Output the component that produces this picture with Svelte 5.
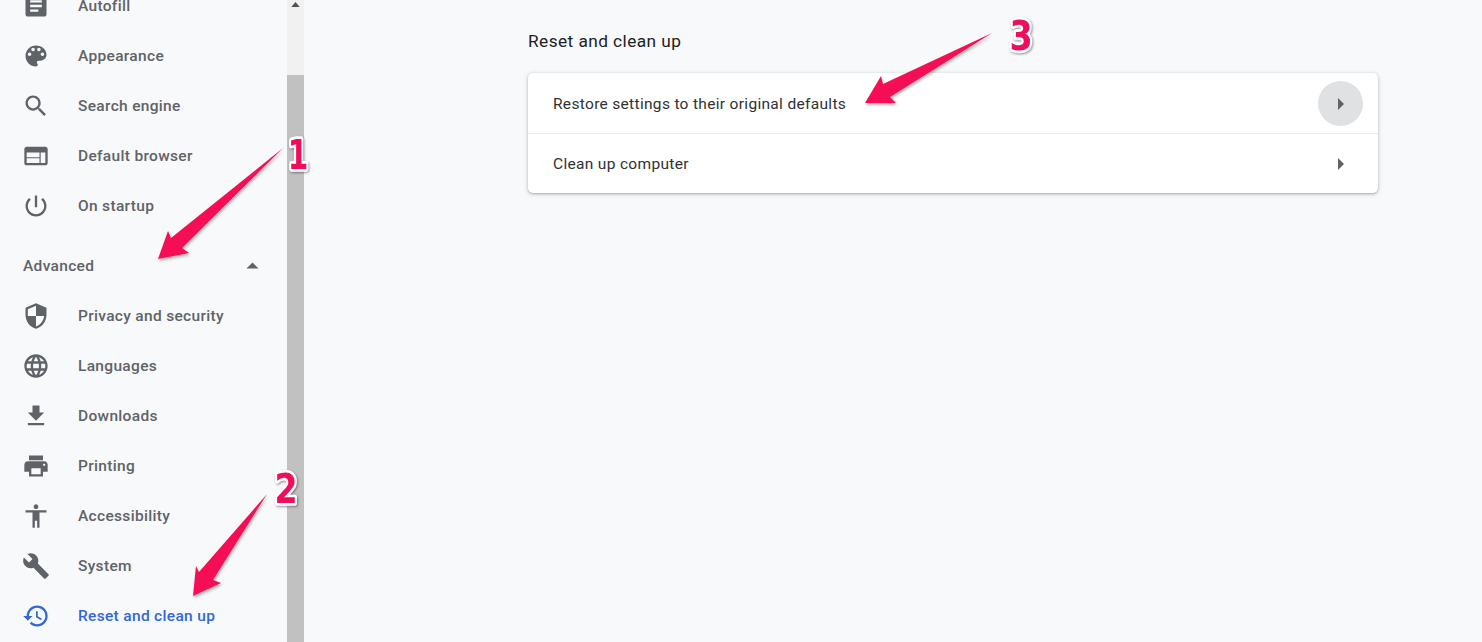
<script>
	const icons = {
		autofill: 'M19 3h-4.18C14.4 1.84 13.3 1 12 1c-1.3 0-2.4.84-2.82 2H5c-1.1 0-2 .9-2 2v14c0 1.1.9 2 2 2h14c1.1 0 2-.9 2-2V5c0-1.1-.9-2-2-2zm-7 0c.55 0 1 .45 1 1s-.45 1-1 1-1-.45-1-1 .45-1 1-1zm2 14H7v-2h7v2zm3-4H7v-2h10v2zm0-4H7V7h10v2z',
		palette: 'M12 3c-4.97 0-9 4.03-9 9s4.03 9 9 9c.83 0 1.5-.67 1.5-1.5 0-.39-.15-.74-.39-1.01-.23-.26-.38-.61-.38-.99 0-.83.67-1.5 1.5-1.5H16c2.76 0 5-2.24 5-5 0-4.42-4.03-8-9-8zm-5.5 9c-.83 0-1.5-.67-1.5-1.5S5.67 9 6.5 9 8 9.67 8 10.5 7.33 12 6.5 12zm3-4C8.67 8 8 7.33 8 6.5S8.67 5 9.5 5s1.5.67 1.5 1.5S10.33 8 9.5 8zm5 0c-.83 0-1.5-.67-1.5-1.5S13.67 5 14.5 5s1.5.67 1.5 1.5S15.33 8 14.5 8zm3 4c-.83 0-1.5-.67-1.5-1.5S16.67 9 17.5 9s1.5.67 1.5 1.5-.67 1.5-1.5 1.5z',
		search: 'M15.5 14h-.79l-.28-.27C15.41 12.59 16 11.11 16 9.5 16 5.91 13.09 3 9.5 3S3 5.91 3 9.5 5.91 16 9.5 16c1.61 0 3.09-.59 4.23-1.57l.27.28v.79l5 4.99L20.49 19l-4.99-5zm-6 0C7.01 14 5 11.99 5 9.5S7.01 5 9.5 5 14 7.01 14 9.5 11.99 14 9.5 14z',
		web: 'M20 4H4c-1.1 0-1.99.9-1.99 2L2 18c0 1.1.9 2 2 2h16c1.1 0 2-.9 2-2V6c0-1.1-.9-2-2-2zm-5 14H4v-4h11v4zm0-5H4V9h11v4zm5 5h-4V9h4v9z',
		power: 'M13 3h-2v10h2V3zm4.83 2.17l-1.42 1.42C17.99 7.86 19 9.81 19 12c0 3.87-3.13 7-7 7s-7-3.13-7-7c0-2.19 1.01-4.14 2.58-5.42L6.17 5.17C4.23 6.82 3 9.26 3 12c0 4.97 4.03 9 9 9s9-4.03 9-9c0-2.74-1.23-5.18-3.17-6.83z',
		security: 'M12 1L3 5v6c0 5.55 3.84 10.74 9 12 5.16-1.26 9-6.45 9-12V5l-9-4zm0 10.99h7c-.53 4.12-3.28 7.79-7 8.94V12H5V6.3l7-3.11v8.8z',
		language: 'M11.99 2C6.47 2 2 6.48 2 12s4.47 10 9.99 10C17.52 22 22 17.52 22 12S17.52 2 11.99 2zm6.93 6h-2.95c-.32-1.25-.78-2.45-1.38-3.56 1.84.63 3.37 1.91 4.33 3.56zM12 4.04c.83 1.2 1.48 2.53 1.91 3.96h-3.82c.43-1.43 1.08-2.76 1.91-3.96zM4.26 14C4.1 13.36 4 12.69 4 12s.1-1.36.26-2h3.38c-.08.66-.14 1.32-.14 2 0 .68.06 1.34.14 2H4.26zm.82 2h2.95c.32 1.25.78 2.45 1.38 3.56-1.84-.63-3.37-1.9-4.33-3.56zm2.95-8H5.08c.96-1.66 2.49-2.93 4.33-3.56C8.81 5.55 8.35 6.75 8.03 8zM12 19.96c-.83-1.2-1.48-2.53-1.91-3.96h3.82c-.43 1.43-1.08 2.76-1.91 3.96zM14.34 14H9.66c-.09-.66-.16-1.32-.16-2 0-.68.07-1.35.16-2h4.68c.09.65.16 1.32.16 2 0 .68-.07 1.34-.16 2zm.25 5.56c.6-1.11 1.06-2.31 1.38-3.56h2.95c-.96 1.65-2.49 2.93-4.33 3.56zM16.36 14c.08-.66.14-1.32.14-2 0-.68-.06-1.34-.14-2h3.38c.16.64.26 1.31.26 2s-.1 1.36-.26 2h-3.38z',
		download: 'M19 9h-4V3H9v6H5l7 7 7-7zM5 18v2h14v-2H5z',
		print: 'M19 8H5c-1.66 0-3 1.34-3 3v6h4v4h12v-4h4v-6c0-1.66-1.34-3-3-3zm-3 11H8v-5h8v5zm3-7c-.55 0-1-.45-1-1s.45-1 1-1 1 .45 1 1-.45 1-1 1zm-1-9H6v4h12V3z',
		accessibility: 'M12 2c1.1 0 2 .9 2 2s-.9 2-2 2-2-.9-2-2 .9-2 2-2zm9 7h-6v13h-2v-6h-2v6H9V9H3V7h18v2z',
		build: 'M22.7 19l-9.1-9.1c.9-2.3.4-5-1.5-6.9-2-2-5-2.4-7.4-1.3L9 6 6 9 1.6 4.7C.4 7.1.9 10.1 2.9 12.1c1.9 1.9 4.6 2.4 6.9 1.5l9.1 9.1c.4.4 1 .4 1.4 0l2.3-2.3c.5-.4.5-1.1.1-1.4z',
		restore: 'M13 3c-4.97 0-9 4.03-9 9H1l3.89 3.89.07.14L9 12H6c0-3.87 3.13-7 7-7s7 3.13 7 7-3.13 7-7 7c-1.93 0-3.68-.79-4.94-2.06l-1.42 1.42C8.27 19.99 10.51 21 13 21c4.97 0 9-4.03 9-9s-4.03-9-9-9zm-1 5v5l4.28 2.54.72-1.21-3.5-2.08V8H12z'
	};

	const basic = [
		{ label: 'Autofill', icon: 'autofill' },
		{ label: 'Appearance', icon: 'palette' },
		{ label: 'Search engine', icon: 'search' },
		{ label: 'Default browser', icon: 'web' },
		{ label: 'On startup', icon: 'power' }
	];

	const advanced = [
		{ label: 'Privacy and security', icon: 'security' },
		{ label: 'Languages', icon: 'language' },
		{ label: 'Downloads', icon: 'download' },
		{ label: 'Printing', icon: 'print' },
		{ label: 'Accessibility', icon: 'accessibility' },
		{ label: 'System', icon: 'build' },
		{ label: 'Reset and clean up', icon: 'restore', active: true }
	];

	const rows = [
		{ label: 'Restore settings to their original defaults', hover: true },
		{ label: 'Clean up computer' }
	];
</script>

{#snippet navItem(item)}
	<div class="nav-item" class:active={item.active}>
		<svg class="nav-icon" viewBox="0 0 24 24"><path d={icons[item.icon]} /></svg>
		<span>{item.label}</span>
	</div>
{/snippet}

<div class="page">
	<nav class="sidebar">
		{#each basic as item}
			{@render navItem(item)}
		{/each}
		<div class="advanced">
			<span>Advanced</span>
			<svg class="caret" viewBox="0 0 14 7"><path d="M0.5 7 7 0.5 13.5 7z" /></svg>
		</div>
		{#each advanced as item}
			{@render navItem(item)}
		{/each}
	</nav>

	<div class="scrollbar">
		<div class="scroll-track">
			<svg class="scroll-up" viewBox="0 0 10 6"><path d="M0 6 5 0 10 6z" /></svg>
		</div>
		<div class="scroll-thumb"></div>
	</div>

	<main class="content">
		<h2>Reset and clean up</h2>
		<section class="card">
			{#each rows as row}
				<div class="row">
					<span>{row.label}</span>
					<div class="arrow-btn" class:hover={row.hover}>
						<svg viewBox="0 0 6 12"><path d="M0 0 6 6 0 12z" /></svg>
					</div>
				</div>
			{/each}
		</section>
	</main>

	<svg class="marks" viewBox="0 0 1482 642">
		<defs>
			<filter id="soft" x="-10%" y="-10%" width="120%" height="120%">
				<feDropShadow dx="1" dy="2" stdDeviation="1.5" flood-color="#000" flood-opacity="0.3" />
			</filter>
		</defs>
		<g fill="#f50f56" filter="url(#soft)">
			<polygon points="283,148 171,238 168,231 158,259 189,253 182,248" />
			<polygon points="267,494 199,572 196,566 193,596 221,583 213,580" />
			<polygon points="992,33 883,84 881,76 865,103 896,103 890,97" />
		</g>
		<g class="digits">
			<text transform="translate(298 169) scale(0.8 1.08)">1</text>
			<text transform="translate(286 503) scale(0.9 1.08)">2</text>
			<text transform="translate(1021 50) scale(0.9 1.08)">3</text>
		</g>
	</svg>
</div>

<style>
	:global(body) {
		margin: 0;
		background: #f8f9fa;
	}

	.page {
		position: relative;
		display: flex;
		height: 642px;
		overflow: hidden;
		background: #f8f9fa;
		font-family: Roboto, "Liberation Sans", sans-serif;
	}

	.sidebar {
		flex: 0 0 287px;
		margin-top: -19.5px;
		color: #5f6368;
		font-size: 15.5px;
		font-weight: 500;
		letter-spacing: 0.32px;
	}

	.nav-item {
		display: flex;
		align-items: center;
		height: 50px;
		padding-left: 22px;
	}

	.nav-icon {
		flex: none;
		width: 28px;
		height: 28px;
		margin-right: 28px;
		fill: #5f6368;
	}

	.nav-item.active {
		color: #3367d6;
	}

	.nav-item.active .nav-icon {
		fill: #3367d6;
	}

	.advanced {
		display: flex;
		align-items: center;
		justify-content: space-between;
		height: 50px;
		margin-top: 10px;
		padding: 0 28px 0 23px;
	}

	.caret {
		width: 13px;
		height: 6.5px;
		fill: #5f6368;
	}

	.scrollbar {
		flex: 0 0 17px;
		display: flex;
		flex-direction: column;
	}

	.scroll-track {
		flex: 0 0 75px;
		display: flex;
		justify-content: center;
		background: #f1f1f1;
	}

	.scroll-up {
		width: 9px;
		height: 5px;
		margin-top: 2px;
		fill: #505050;
	}

	.scroll-thumb {
		flex: 1;
		background: #c1c1c1;
	}

	.content {
		flex: none;
		width: 850px;
		margin-left: 224px;
		padding-top: 31px;
	}

	h2 {
		margin: 0 0 21px;
		color: #202124;
		font-size: 17.25px;
		font-weight: 400;
		letter-spacing: 0.44px;
		line-height: 21px;
	}

	.card {
		background: #fff;
		border-radius: 5px;
		box-shadow: 0 1px 2px rgba(60, 64, 67, 0.3), 0 1px 4px 1px rgba(60, 64, 67, 0.15);
		overflow: hidden;
	}

	.row {
		box-sizing: border-box;
		display: flex;
		align-items: center;
		justify-content: space-between;
		height: 60px;
		padding: 0 15px 0 25px;
		border-top: 1px solid transparent;
		color: #303134;
		font-size: 15.5px;
		letter-spacing: 0.32px;
	}

	.row + .row {
		border-top-color: #e8eaed;
	}

	.arrow-btn {
		display: flex;
		align-items: center;
		justify-content: center;
		width: 45px;
		height: 45px;
		border-radius: 50%;
	}

	.arrow-btn.hover {
		background: #dfe1e2;
	}

	.arrow-btn svg {
		width: 6px;
		height: 12px;
		fill: #5f6368;
	}

	.marks {
		position: absolute;
		inset: 0;
		width: 1482px;
		height: 642px;
		pointer-events: none;
	}

	.digits text {
		fill: #ee0f5c;
		stroke: #fff;
		stroke-width: 5px;
		paint-order: stroke;
		stroke-linejoin: round;
		font-family: "DejaVu Sans", sans-serif;
		font-size: 37px;
		font-weight: 700;
		text-anchor: middle;
		filter: drop-shadow(1px 1.5px 1px rgba(0, 0, 0, 0.4));
	}
</style>
